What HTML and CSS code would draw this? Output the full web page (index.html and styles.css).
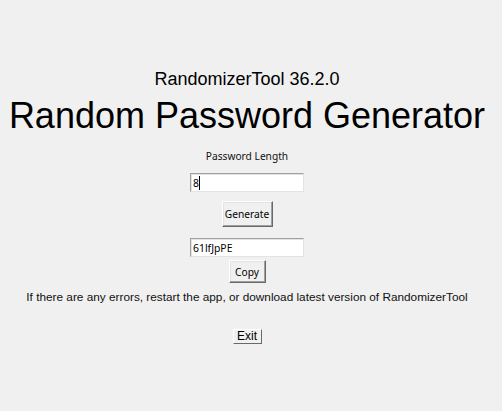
FILE: index.html
```html
<!DOCTYPE html>
<html>
<head>
<meta charset="utf-8">
<link rel="stylesheet" href="styles.css">
</head>
<body>
<div class="app">
  <div class="version">RandomizerTool 36.2.0</div>
  <div class="title">Random Password Generator</div>
  <div class="label">Password Length</div>
  <div class="entry entry-len"><span class="val">8</span><span class="caret"></span></div>
  <div class="btn btn-gen">Generate</div>
  <div class="entry entry-out"><span class="val">61lfJpPE</span></div>
  <div class="btn btn-copy">Copy</div>
  <div class="info">If there are any errors, restart the app, or download latest version of RandomizerTool</div>
  <div class="btn-exit">Exit</div>
</div>
</body>
</html>
```
FILE: styles.css
```css
html, body {
  margin: 0;
  padding: 0;
  background: #f0f0f0;
  width: 502px;
  height: 411px;
  overflow: hidden;
}
.app {
  display: flex;
  flex-direction: column;
  align-items: center;
  padding-top: 69px;
  padding-right: 8px;
  font-family: "Liberation Sans", Arial, sans-serif;
  color: #000;
}
.version {
  font-size: 18px;
  line-height: 20px;
  height: 20px;
}
.title {
  margin-top: 6px;
  font-size: 36px;
  line-height: 42px;
  height: 42px;
  white-space: nowrap;
}
.label {
  margin-top: 12px;
  font-family: "Noto Sans", sans-serif;
  font-size: 10.2px;
  line-height: 15px;
  height: 15px;
  color: #111;
}
.entry {
  box-sizing: border-box;
  width: 114px;
  height: 19px;
  background: #fff;
  border-top: 1px solid #a0a0a0;
  border-left: 1px solid #a0a0a0;
  border-right: 1px solid #e3e3e3;
  border-bottom: 1px solid #e3e3e3;
  box-shadow: inset 1px 1px 0 #e3e3e3;
  display: flex;
  align-items: center;
  padding-left: 2px;
  font-family: "Noto Sans", sans-serif;
  font-size: 10.4px;
  white-space: nowrap;
}
.entry-len {
  margin-top: 9px;
}
.caret {
  display: inline-block;
  width: 1px;
  height: 14px;
  background: #000;
}
.btn {
  box-sizing: border-box;
  background: #f0f0f0;
  border-top: 1px solid #fff;
  border-left: 1px solid #fff;
  border-right: 1px solid #696969;
  border-bottom: 1px solid #696969;
  box-shadow: inset -1px -1px 0 #a0a0a0, inset 1px 1px 0 #e3e3e3;
  display: flex;
  align-items: center;
  justify-content: center;
  font-family: "Noto Sans", sans-serif;
  font-size: 10.2px;
  white-space: nowrap;
}
.btn-gen {
  margin-top: 9px;
  width: 51px;
  height: 26px;
}
.entry-out {
  margin-top: 11px;
}
.btn-copy {
  margin-top: 3px;
  width: 37px;
  height: 23px;
}
.info {
  margin-top: 7px;
  font-size: 11.8px;
  line-height: 14px;
  height: 14px;
  white-space: nowrap;
  color: #111;
}
.btn-exit {
  box-sizing: border-box;
  margin-top: 25px;
  width: 29px;
  height: 15px;
  background: #f0f0f0;
  border-top: 1px solid #fff;
  border-left: 1px solid #fff;
  border-right: 1px solid #696969;
  border-bottom: 1px solid #696969;
  display: flex;
  align-items: center;
  justify-content: center;
  font-size: 12px;
  line-height: 13px;
}
```
